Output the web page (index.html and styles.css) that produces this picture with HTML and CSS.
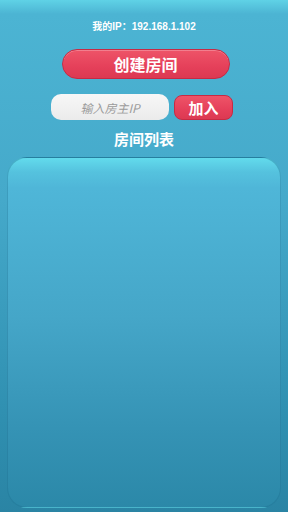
FILE: index.html
```html
<!DOCTYPE html>
<html lang="zh">
<head>
<meta charset="UTF-8">
<meta name="viewport" content="width=device-width, initial-scale=1.0">
<title>房间</title>
<link rel="stylesheet" href="styles.css">
</head>
<body>

<div class="screen">
  <div class="my-ip">我的IP：192.168.1.102</div>

  <button class="btn-create">创建房间</button>

  <div class="join-row">
    <input type="text" class="ip-input" placeholder="输入房主IP">
    <button class="btn-join">加入</button>
  </div>

  <h2 class="list-title">房间列表</h2>

  <div class="room-list"></div>
</div>

</body>
</html>
```

FILE: styles.css
```css
  html, body {
    margin: 0;
    height: 100%;
  }
  body {
    font-family: "Liberation Sans", "Noto Sans CJK SC", sans-serif;
    background: linear-gradient(to bottom, #5fd2e6 0px, #4cb4d3 14px, #45a9ca 200px, #2f8fb0 420px, #2a84a4 512px);
    overflow: hidden;
  }

  .screen {
    width: 288px;
    height: 512px;
    display: flex;
    flex-direction: column;
    align-items: center;
    box-sizing: border-box;
    padding-top: 20px;
  }

  .my-ip {
    color: #fff;
    font-size: 10px;
    font-weight: bold;
    line-height: 13px;
  }

  .btn-create {
    margin-top: 16px;
    margin-left: 3px;
    width: 168px;
    height: 30px;
    border-radius: 15px;
    border: 1.5px solid #c72a44;
    background: linear-gradient(to bottom, #ee5468, #e5405a 60%, #dc3952);
    box-shadow: inset 0 1px 0 rgba(255, 255, 255, 0.25);
    color: #fff;
    font-family: "Noto Sans CJK SC", sans-serif;
    font-size: 16px;
    font-weight: bold;
    padding: 0;
    cursor: pointer;
  }

  .join-row {
    margin-top: 15px;
    margin-right: 4px;
    display: flex;
    align-items: center;
    gap: 5px;
  }
  .ip-input {
    width: 118px;
    height: 26px;
    box-sizing: border-box;
    border: none;
    border-radius: 10px;
    background: linear-gradient(to bottom, #f7f7f7, #ebebeb);
    text-align: center;
    font-family: "Noto Sans CJK SC", sans-serif;
    font-size: 12px;
    font-style: italic;
    outline: none;
  }
  .ip-input::placeholder {
    color: #9b9b9b;
  }
  .btn-join {
    width: 59px;
    height: 25px;
    border-radius: 8px;
    border: 1.5px solid #c72a44;
    background: linear-gradient(to bottom, #ee5468, #e5405a 60%, #dc3952);
    color: #fff;
    font-family: "Noto Sans CJK SC", sans-serif;
    font-size: 15px;
    font-weight: bold;
    padding: 0;
    cursor: pointer;
  }

  .list-title {
    margin: 9px 0 0;
    color: #fff;
    font-family: "Noto Sans CJK SC", sans-serif;
    font-size: 15px;
    font-weight: bold;
    line-height: 20px;
  }

  .room-list {
    margin-top: 8px;
    width: 274px;
    height: 351px;
    box-sizing: border-box;
    border: 1px solid rgba(30, 110, 140, 0.35);
    border-radius: 20px;
    background: linear-gradient(to bottom, #62dbec 0px, #55c2de 14px, #4fb6d8 30px, #45a6c8 160px, #3593b5 270px, #2b88a8 351px);
  }
```
